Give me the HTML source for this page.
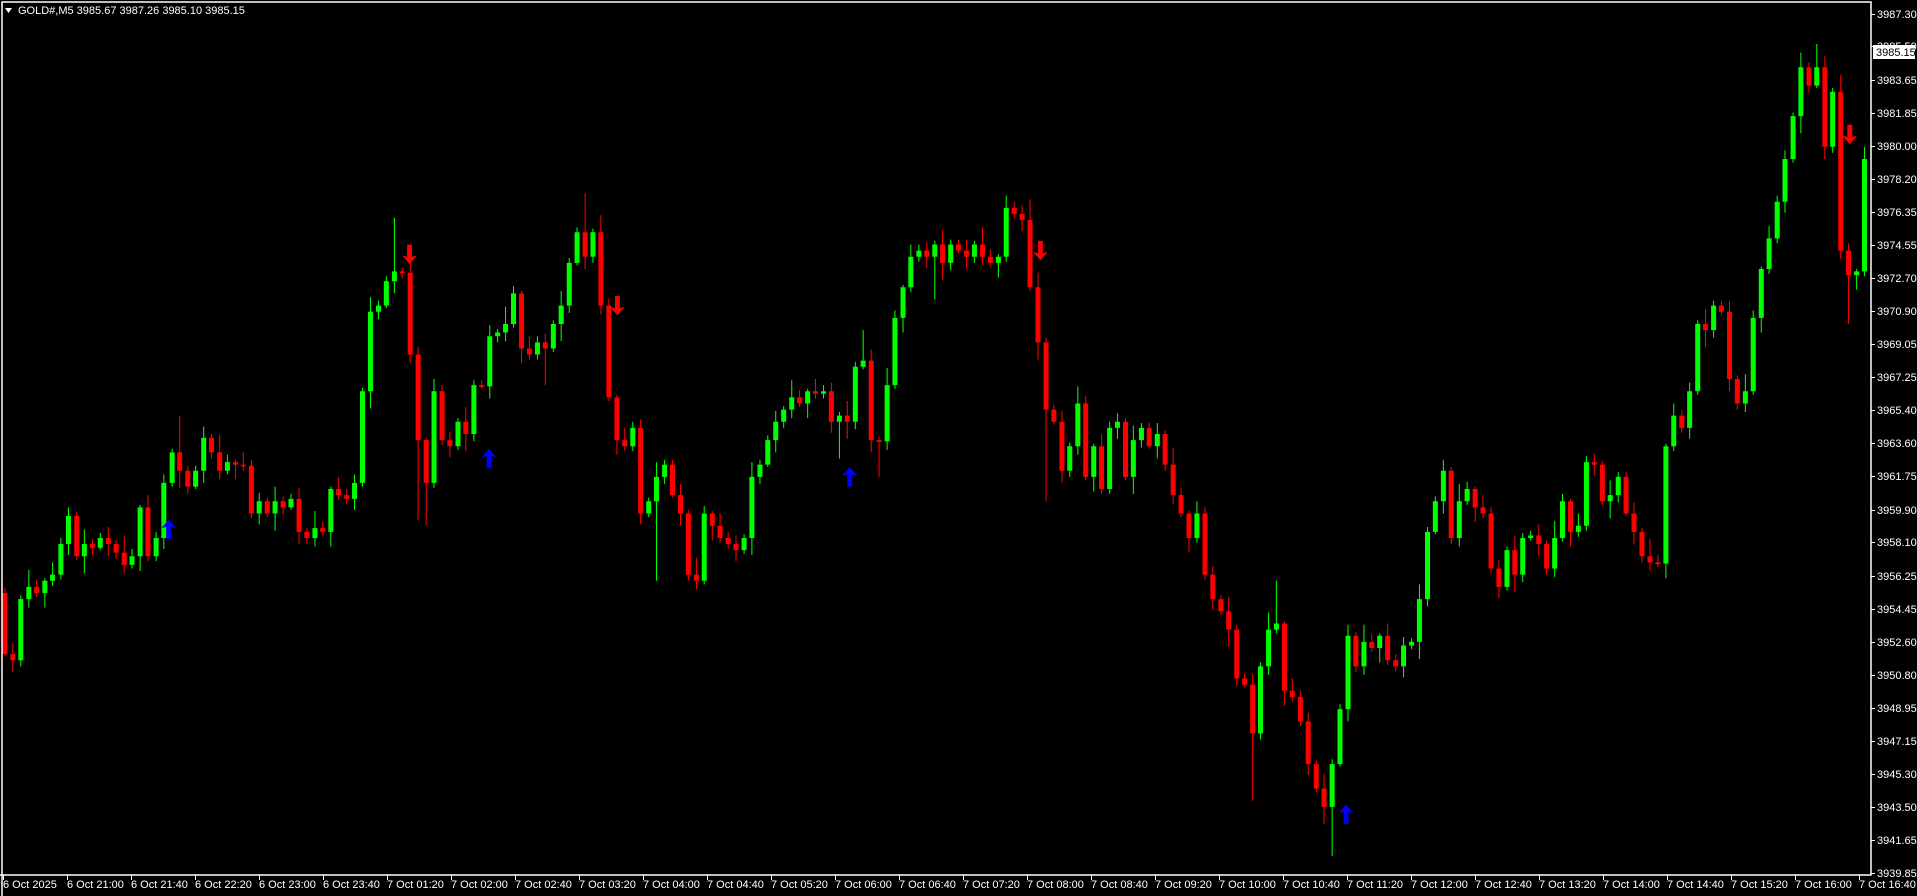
<!DOCTYPE html>
<html><head><meta charset="utf-8">
<style>
html,body{margin:0;padding:0;background:#000;width:1917px;height:896px;overflow:hidden}
svg{display:block}
text{font-family:"Liberation Sans",sans-serif;font-size:11px;fill:#fff}
</style></head>
<body>
<svg width="1917" height="896" viewBox="0 0 1917 896" xmlns="http://www.w3.org/2000/svg">
<rect width="1917" height="896" fill="#000"/>
<g transform="scale(1.2226)" fill="none">
<path stroke="#ff0000" stroke-width="0.85" d="M4 481V537M10.5 526V550M30 474V488M62.8 419V458M75.6 441V454M88.6 431V455M95 442V457M101.6 438V469M121 405V459M147 340V399M153.6 381V404M173 355V375M179.7 356V392M192.6 376V392M199 370V385M205.6 376V424M218.6 407V423M231.6 406V421M244.6 399V445M251 432V445M264 426V438M277 390V409M283.6 400V412M329 219V228M335.5 209V297M342 284V425M348.6 358V430M361.6 315V364M368 353V374M381 333V369M394 311V318M426.6 238V297M433 275V294M446 273V315M478.6 158V220M491.5 176V257M498 244V328M504.6 323V372M511 350V369M524 343V429M550 376V407M556.6 396V430M563 417V475M569.6 456V482M582.6 418V442M589 420V444M595.6 435V449M602 438V459M654 319V333M667 310V326M680 313V354M693 328V359M712.6 286V370M719 357V390M758 198V219M771 188V229M784 196V207M790.6 196V220M803.6 186V217M810 204V218M829.6 165V179M836 168V189M842.5 163V238M849 223V294M855.6 276V410M862 331V347M868.6 336V395M888 324V393M901 355V404M920.6 342V393M940 346V367M953 352V385M959.6 366V412M966 399V423M972.5 418V452M985.6 415V474M992 463V499M998.6 487V503M1005 488V529M1011.6 511V561M1018 551V562M1024.6 551V655M1050.6 508V577M1057 555V574M1063.6 565V594M1070 583V634M1076.6 622V648M1083 633V674M1109 517V550M1122 519V533M1135 510V544M1141.6 535V549M1187 382V445M1206.6 398V427M1213 405V424M1219.6 415V469M1226 458V489M1239 438V484M1258.6 429V455M1265 442V470M1284.6 408V447M1304 371V389M1310.6 377V413M1330 386V422M1336.5 411V445M1343 432V460M1349.6 441V467M1356 454V464M1375.6 335V354M1395 253V284M1408 246V257M1414.6 246V320M1421 307V335M1479.6 51V76M1492.6 46V130M1505.6 61V212M1512 199V265"/>
<path stroke="#ff0000" stroke-width="4.1" d="M4 485V535M10.5 535V540M30 480V485M62.8 422V455M75.6 445V448M88.6 440V445M95 445V452M101.6 452V462M121 415V455M147 370V385M153.6 385V398M173 358V370M179.7 370V385M192.6 378V380M199 380V381.5M205.6 381V420M218.6 410V420M231.6 410V415M244.6 408V435M251 435V440M264 432V435M277 400V405M283.6 405V408M329 222V223.5M335.5 223V290M342 290V360M348.6 360V395M361.6 320V360M368 360V365M381 345V355M394 315V316.5M426.6 240V285M433 285V290M446 280V285M478.6 190V210M491.5 190V250M498 250V325M504.6 325V360M511 360V365M524 350V420M550 380V405M556.6 405V420M563 420V470M569.6 470V475M582.6 420V430M589 430V440M595.6 440V445M602 445V450M654 325V330M667 320V322M680 320V345M693 340V345M712.6 295V360M719 360V361.5M758 205V210M771 200V215M784 200V205M790.6 205V210M803.6 200V210M810 210V215M829.6 170V175M836 175V180M842.5 180V235M849 235V280M855.6 280V335M862 335V345M868.6 345V385M888 330V390M901 365V400M920.6 345V390M940 350V365M953 355V380M959.6 380V405M966 405V420M972.5 420V440M985.6 420V470M992 470V490M998.6 490V500M1005 500V515M1011.6 515V555M1018 555V560M1024.6 560V600M1050.6 510V565M1057 565V570M1063.6 570V590M1070 590V625M1076.6 625V645M1083 645V660M1109 520V545M1122 525V530M1135 520V540M1141.6 540V545M1187 385V440M1206.6 400V415M1213 415V420M1219.6 420V465M1226 465V480M1239 450V470M1258.6 438V445M1265 445V465M1284.6 410V435M1304 378V380M1310.6 380V410M1330 390V420M1336.5 420V435M1343 435V455M1349.6 455V460M1356 460V461.5M1375.6 340V350M1395 265V270M1408 250V255M1414.6 255V310M1421 310V330M1479.6 55V70M1492.6 55V120M1505.6 75V205M1512 205V225"/>
<path stroke="#00ff00" stroke-width="0.85" d="M17 487V545M23.6 466V497M36.7 473V497M43 460V479M49.8 440V474M56 415V454M69 433V469M82 436V450M108 449V465M114.6 413V467M127.7 435V459M134 388V449M140.8 367V398M160 381V400M166.6 349V395M186 372V388M212 403V429M225 398V434M238 404V417M257.6 418V447M270.6 398V447M290 388V417M296.5 317V398M303 243V334M309.6 246V261M316 226V252M322.6 178V240M355 310V399M374.6 342V368M387.6 311V361M400.6 266V326M407 269V280M413.5 251V279M420 234V268M439.6 275V294M452.6 262V288M459 238V279M465.6 211V256M472 186V217M485 187V215M517.6 345V369M530.6 407V423M537 378V475M543.6 376V396M576 414V478M608.6 437V453M615 378V454M621.6 376V396M628 356V382M634.5 336V370M641 332V350M647.6 311V342M660.6 318V342M673.6 315V326M686.6 337V375M699.6 296V351M706 270V302M725.6 301V368M732 254V318M738.6 233V272M745 200V239M751.6 200V214M764.6 197V245M777.6 196V221M797 197V215M816.6 208V227M823 160V214M875 362V390M881.6 316V372M894.6 363V402M907.6 345V404M914 338V359M927 348V404M933.6 346V366M946.6 346V375M979 410V444M1031 542V605M1037.6 501V552M1044 475V518M1089.6 621V700M1096 576V627M1102.6 511V590M1115.6 511V552M1128.5 518V542M1148 521V554M1154.6 522V531M1161 478V539M1167.6 431V496M1174 406V437M1180.6 376V420M1193.6 396V447M1200 394V413M1232.6 447V483M1245.5 436V476M1252 434V442M1271.6 426V472M1278 404V443M1291 420V439M1297.6 373V434M1317 393V424M1323.6 386V411M1362.6 363V473M1369 330V369M1382 313V359M1388.6 262V323M1401.6 246V276M1427.6 306V337M1434 254V323M1440.6 218V272M1447 185V224M1453.6 160V199M1460 123V174M1466.6 92V133M1473 43V109M1486 36V72M1499 72V125M1518.6 220V237M1525 120V226"/>
<path stroke="#00ff00" stroke-width="4.1" d="M17 490V540M23.6 480V490M36.7 475V485M43 470V475M49.8 445V470M56 422V445M69 445V455M82 440V448M108 455V462M114.6 415V455M127.7 440V455M134 395V440M140.8 370V395M160 385V398M166.6 358V385M186 378V385M212 410V420M225 410V420M238 408V415M257.6 432V440M270.6 400V435M290 395V408M296.5 320V395M303 255V320M309.6 250V255M316 230V250M322.6 222V230M355 320V395M374.6 345V365M387.6 315V355M400.6 275V316M407 272V275M413.5 265V272M420 240V265M439.6 280V290M452.6 265V285M459 250V265M465.6 215V250M472 190V215M485 190V210M517.6 350V365M530.6 410V420M537 390V410M543.6 380V390M576 420V475M608.6 440V450M615 390V440M621.6 380V390M628 360V380M634.5 345V360M641 335V345M647.6 325V335M660.6 320V330M673.6 320V322M686.6 340V345M699.6 300V345M706 295V300M725.6 315V361M732 260V315M738.6 235V260M745 210V235M751.6 205V210M764.6 200V210M777.6 200V215M797 200V210M816.6 210V215M823 170V210M875 365V385M881.6 330V365M894.6 365V390M907.6 350V400M914 345V350M927 360V390M933.6 350V360M946.6 355V365M979 420V440M1031 545V600M1037.6 515V545M1044 510V515M1089.6 625V660M1096 580V625M1102.6 520V580M1115.6 525V545M1128.5 520V530M1148 528V545M1154.6 525V528M1161 490V525M1167.6 435V490M1174 410V435M1180.6 385V410M1193.6 410V440M1200 400V410M1232.6 450V480M1245.5 440V470M1252 438V440M1271.6 440V465M1278 410V440M1291 430V435M1297.6 378V430M1317 405V410M1323.6 390V405M1362.6 365V461M1369 340V365M1382 320V350M1388.6 265V320M1401.6 250V270M1427.6 320V330M1434 260V320M1440.6 220V260M1447 195V220M1453.6 165V195M1460 130V165M1466.6 95V130M1473 55V95M1486 55V70M1499 75V120M1518.6 222V225M1525 130V222"/>
<g fill="#0000ff">
<path d="M138 425L132 432L136 431L136 441L140 441L140 431L144 432Z"/>
<path d="M400 367L394 374L398 373L398 383L402 383L402 373L406 374Z"/>
<path d="M695 382L689 389L693 388L693 398L697 398L697 388L701 389Z"/>
<path d="M1101 658L1095 665L1099 664L1099 674L1103 674L1103 664L1107 665Z"/>
</g>
<g fill="#ff0000">
<path d="M335 216L329 209L333 210L333 200L337 200L337 210L341 209Z"/>
<path d="M505 258L499 251L503 252L503 242L507 242L507 252L511 251Z"/>
<path d="M851 213L845 206L849 207L849 197L853 197L853 207L857 206Z"/>
<path d="M1513 118L1507 111L1511 112L1511 102L1515 102L1515 112L1519 111Z"/>
</g>
</g>
<polyline points="2,896 2,2 1871,2 1871,875 0,875" fill="none" stroke="#fff" stroke-width="1.5"/>
<polygon points="5,8 12,8 8.5,13" fill="#fff"/>
<text x="18" y="14">GOLD#,M5  3985.67 3987.26 3985.10 3985.15</text>
<g fill="#fff">
<rect x="1871" y="14" width="4" height="1"/><rect x="1871" y="46" width="4" height="1"/><rect x="1871" y="80" width="4" height="1"/><rect x="1871" y="113" width="4" height="1"/><rect x="1871" y="146" width="4" height="1"/><rect x="1871" y="179" width="4" height="1"/><rect x="1871" y="212" width="4" height="1"/><rect x="1871" y="245" width="4" height="1"/><rect x="1871" y="278" width="4" height="1"/><rect x="1871" y="311" width="4" height="1"/><rect x="1871" y="344" width="4" height="1"/><rect x="1871" y="377" width="4" height="1"/><rect x="1871" y="410" width="4" height="1"/><rect x="1871" y="443" width="4" height="1"/><rect x="1871" y="476" width="4" height="1"/><rect x="1871" y="510" width="4" height="1"/><rect x="1871" y="542" width="4" height="1"/><rect x="1871" y="576" width="4" height="1"/><rect x="1871" y="609" width="4" height="1"/><rect x="1871" y="642" width="4" height="1"/><rect x="1871" y="675" width="4" height="1"/><rect x="1871" y="708" width="4" height="1"/><rect x="1871" y="741" width="4" height="1"/><rect x="1871" y="774" width="4" height="1"/><rect x="1871" y="807" width="4" height="1"/><rect x="1871" y="840" width="4" height="1"/><rect x="1871" y="873" width="4" height="1"/>
</g>
<g>
<text x="1877" y="18">3987.30</text><text x="1877" y="50">3985.50</text><text x="1877" y="84">3983.65</text><text x="1877" y="117">3981.85</text><text x="1877" y="150">3980.00</text><text x="1877" y="183">3978.20</text><text x="1877" y="216">3976.35</text><text x="1877" y="249">3974.55</text><text x="1877" y="282">3972.70</text><text x="1877" y="315">3970.90</text><text x="1877" y="348">3969.05</text><text x="1877" y="381">3967.25</text><text x="1877" y="414">3965.40</text><text x="1877" y="447">3963.60</text><text x="1877" y="480">3961.75</text><text x="1877" y="514">3959.90</text><text x="1877" y="546">3958.10</text><text x="1877" y="580">3956.25</text><text x="1877" y="613">3954.45</text><text x="1877" y="646">3952.60</text><text x="1877" y="679">3950.80</text><text x="1877" y="712">3948.95</text><text x="1877" y="745">3947.15</text><text x="1877" y="778">3945.30</text><text x="1877" y="811">3943.50</text><text x="1877" y="844">3941.65</text><text x="1877" y="877">3939.85</text>
</g>
<g fill="#fff">
<rect x="3" y="875" width="1" height="5"/><rect x="67" y="875" width="1" height="5"/><rect x="131" y="875" width="1" height="5"/><rect x="195" y="875" width="1" height="5"/><rect x="259" y="875" width="1" height="5"/><rect x="323" y="875" width="1" height="5"/><rect x="387" y="875" width="1" height="5"/><rect x="451" y="875" width="1" height="5"/><rect x="515" y="875" width="1" height="5"/><rect x="579" y="875" width="1" height="5"/><rect x="643" y="875" width="1" height="5"/><rect x="707" y="875" width="1" height="5"/><rect x="771" y="875" width="1" height="5"/><rect x="835" y="875" width="1" height="5"/><rect x="899" y="875" width="1" height="5"/><rect x="963" y="875" width="1" height="5"/><rect x="1027" y="875" width="1" height="5"/><rect x="1091" y="875" width="1" height="5"/><rect x="1155" y="875" width="1" height="5"/><rect x="1219" y="875" width="1" height="5"/><rect x="1283" y="875" width="1" height="5"/><rect x="1347" y="875" width="1" height="5"/><rect x="1411" y="875" width="1" height="5"/><rect x="1475" y="875" width="1" height="5"/><rect x="1539" y="875" width="1" height="5"/><rect x="1603" y="875" width="1" height="5"/><rect x="1667" y="875" width="1" height="5"/><rect x="1731" y="875" width="1" height="5"/><rect x="1795" y="875" width="1" height="5"/><rect x="1859" y="875" width="1" height="5"/>
</g>
<g>
<text x="3" y="888">6 Oct 2025</text><text x="67" y="888">6 Oct 21:00</text><text x="131" y="888">6 Oct 21:40</text><text x="195" y="888">6 Oct 22:20</text><text x="259" y="888">6 Oct 23:00</text><text x="323" y="888">6 Oct 23:40</text><text x="387" y="888">7 Oct 01:20</text><text x="451" y="888">7 Oct 02:00</text><text x="515" y="888">7 Oct 02:40</text><text x="579" y="888">7 Oct 03:20</text><text x="643" y="888">7 Oct 04:00</text><text x="707" y="888">7 Oct 04:40</text><text x="771" y="888">7 Oct 05:20</text><text x="835" y="888">7 Oct 06:00</text><text x="899" y="888">7 Oct 06:40</text><text x="963" y="888">7 Oct 07:20</text><text x="1027" y="888">7 Oct 08:00</text><text x="1091" y="888">7 Oct 08:40</text><text x="1155" y="888">7 Oct 09:20</text><text x="1219" y="888">7 Oct 10:00</text><text x="1283" y="888">7 Oct 10:40</text><text x="1347" y="888">7 Oct 11:20</text><text x="1411" y="888">7 Oct 12:00</text><text x="1475" y="888">7 Oct 12:40</text><text x="1539" y="888">7 Oct 13:20</text><text x="1603" y="888">7 Oct 14:00</text><text x="1667" y="888">7 Oct 14:40</text><text x="1731" y="888">7 Oct 15:20</text><text x="1795" y="888">7 Oct 16:00</text><text x="1859" y="888">7 Oct 16:40</text>
</g>
<rect x="1873" y="45" width="42" height="14" fill="#fff"/>
<text x="1876" y="56" style="fill:#000">3985.15</text>
</svg>
</body></html>
